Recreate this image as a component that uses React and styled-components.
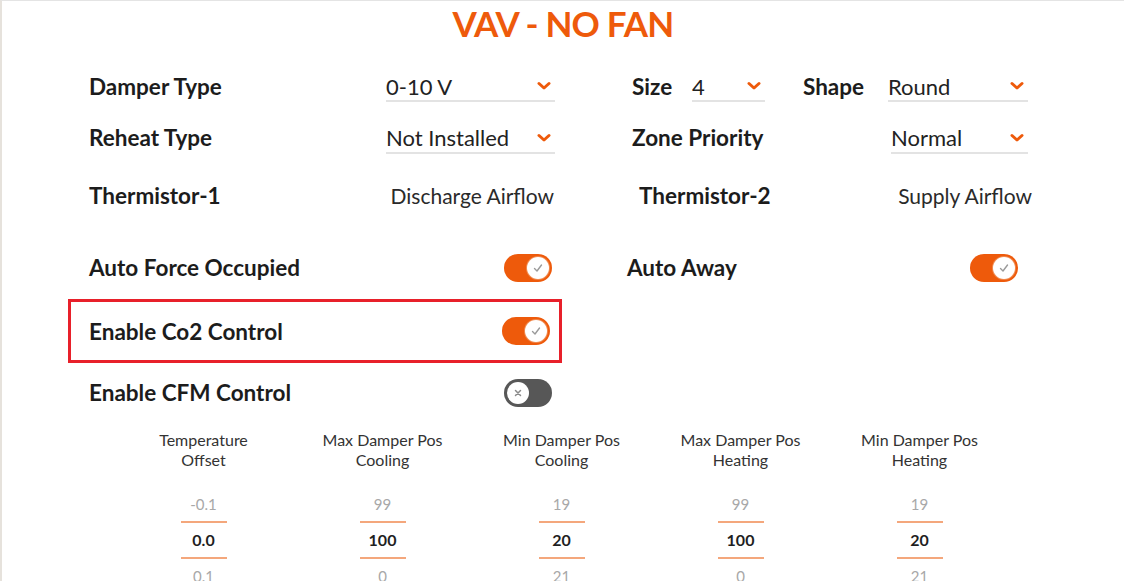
import React from "react";
import styled, { createGlobalStyle } from "styled-components";

const GlobalStyle = createGlobalStyle`
  html, body {
    margin: 0;
    padding: 0;
    background: #fff;
  }
  body {
    font-family: Lato, "Open Sans", sans-serif;
    color: #1c1c1c;
  }
`;

const ORANGE = "#ee5a0b";

const Frame = styled.div`
  width: 1124px;
  height: 581px;
  box-sizing: border-box;
  border-top: 1px solid #e4e4e4;
  border-left: 2px solid #e6e2dc;
  overflow: hidden;
`;

const Title = styled.h1`
  margin: 0;
  height: 44px;
  line-height: 44px;
  text-align: center;
  font-size: 35px;
  font-weight: 700;
  letter-spacing: -0.8px;
  color: ${ORANGE};
`;

const Form = styled.div`
  padding: 15px 0 0 87px;
`;

const SelectRow = styled.div`
  display: grid;
  grid-template-columns: 297px 169px 477px;
  align-items: center;
  height: ${(p) => p.$h}px;
`;

const Half = styled.div`
  display: flex;
  align-items: center;
  padding-left: ${(p) => 77 + (p.$indent || 0)}px;
`;

const Label = styled.div`
  font-size: 22.5px;
  font-weight: 700;
  color: #1c1c1c;
  white-space: nowrap;
  width: ${(p) => (p.$w ? `${p.$w}px` : "auto")};
  margin-left: ${(p) => p.$ml || 0}px;
  flex-shrink: 0;
`;

const SelectBox = styled.div`
  display: flex;
  align-items: center;
  justify-content: space-between;
  box-sizing: border-box;
  height: 32px;
  padding: 2px 4px 0 0;
  border-bottom: 2px solid #e3e3e3;
  width: ${(p) => p.$w}px;
  margin-left: ${(p) => (p.$auto ? "auto" : "0")};
  margin-right: ${(p) => p.$mr || 0}px;
  font-size: 22px;
  color: #222;
  white-space: nowrap;
`;

const Value = styled.div`
  font-size: 21px;
  color: #2a2a2a;
  text-align: right;
  white-space: nowrap;
  margin-left: ${(p) => (p.$auto ? "auto" : "0")};
  margin-right: ${(p) => p.$mr || 0}px;
`;

const ToggleRow = styled.div`
  display: flex;
  align-items: center;
  height: ${(p) => p.$h || 62}px;
`;

const ToggleCell = styled.div`
  display: flex;
  align-items: center;
  justify-content: space-between;
  width: ${(p) => p.$w}px;
  margin-left: ${(p) => p.$ml || 0}px;
`;

const Highlight = styled.div`
  display: flex;
  align-items: center;
  box-sizing: border-box;
  width: 494px;
  height: 64px;
  margin-left: -21px;
  padding: 0 9px 0 18px;
  border: 3px solid #e8202a;
`;

const Track = styled.div`
  position: relative;
  width: 48px;
  height: 28px;
  border-radius: 14px;
  background: ${(p) => (p.$on ? ORANGE : "#575757")};
  flex-shrink: 0;
`;

const Knob = styled.div`
  position: absolute;
  top: 3px;
  left: ${(p) => (p.$on ? "23px" : "3px")};
  width: 22px;
  height: 22px;
  border-radius: 50%;
  background: #fff;
  box-shadow: ${(p) => (p.$on ? "0 0 0 1px #f08a4f" : "none")};
  display: flex;
  align-items: center;
  justify-content: center;
`;

const Pickers = styled.div`
  display: grid;
  grid-template-columns: repeat(5, 179px);
  margin-left: 25px;
  padding-top: 8px;
`;

const Picker = styled.div`
  display: flex;
  flex-direction: column;
  align-items: center;
`;

const PickerLabel = styled.div`
  font-size: 16px;
  line-height: 20px;
  color: #333;
  text-align: center;
  height: 40px;
  margin-bottom: 17px;
  white-space: nowrap;
`;

const Wheel = styled.div`
  display: flex;
  flex-direction: column;
  align-items: center;
`;

const WheelItem = styled.div`
  height: 34px;
  line-height: 34px;
  font-size: ${(p) => (p.$active ? "16px" : "15px")};
  font-weight: ${(p) => (p.$active ? 700 : 400)};
  color: ${(p) => (p.$active ? "#1f1f1f" : "#a8a8a8")};
`;

const WheelLine = styled.div`
  width: 46px;
  height: 2px;
  background: #f4a77c;
`;

const Chevron = () => (
  <svg width="14" height="10" viewBox="0 0 14 10">
    <polyline
      points="2,2.5 7,7 12,2.5"
      fill="none"
      stroke={ORANGE}
      strokeWidth="3"
      strokeLinecap="round"
      strokeLinejoin="round"
    />
  </svg>
);

const Select = ({ value, w, auto, mr }) => (
  <SelectBox $w={w} $auto={auto} $mr={mr}>
    <span>{value}</span>
    <Chevron />
  </SelectBox>
);

const Toggle = ({ on }) => (
  <Track $on={on}>
    <Knob $on={on}>
      {on ? (
        <svg width="10" height="10" viewBox="0 0 10 10">
          <polyline
            points="1.5,5.5 4,8 8.5,2"
            fill="none"
            stroke="#9a9a9a"
            strokeWidth="1.4"
            strokeLinecap="round"
            strokeLinejoin="round"
          />
        </svg>
      ) : (
        <svg width="10" height="10" viewBox="0 0 10 10">
          <path
            d="M2.5 2.5 L7.5 7.5 M7.5 2.5 L2.5 7.5"
            stroke="#8a8a8a"
            strokeWidth="1.5"
            strokeLinecap="round"
          />
        </svg>
      )}
    </Knob>
  </Track>
);

const pickers = [
  { label: ["Temperature", "Offset"], values: ["-0.1", "0.0", "0.1"] },
  { label: ["Max Damper Pos", "Cooling"], values: ["99", "100", "0"] },
  { label: ["Min Damper Pos", "Cooling"], values: ["19", "20", "21"] },
  { label: ["Max Damper Pos", "Heating"], values: ["99", "100", "0"] },
  { label: ["Min Damper Pos", "Heating"], values: ["19", "20", "21"] },
];

export default function App() {
  return (
    <>
      <GlobalStyle />
      <Frame>
        <Title>VAV - NO FAN</Title>
        <Form>
          <SelectRow $h={52}>
            <Label>Damper Type</Label>
            <Select value="0-10 V" w={169} />
            <Half>
              <Label $w={60}>Size</Label>
              <Select value="4" w={73} />
              <Label $w={85} $ml={38}>Shape</Label>
              <Select value="Round" w={140} />
            </Half>
          </SelectRow>
          <SelectRow $h={51}>
            <Label>Reheat Type</Label>
            <Select value="Not Installed" w={169} />
            <Half>
              <Label>Zone Priority</Label>
              <Select value="Normal" w={137} auto mr={4} />
            </Half>
          </SelectRow>
          <SelectRow $h={64}>
            <Label>Thermistor-1</Label>
            <Value $mr={1}>Discharge Airflow</Value>
            <Half $indent={7}>
              <Label>Thermistor-2</Label>
              <Value $auto>Supply Airflow</Value>
            </Half>
          </SelectRow>
          <div style={{ height: 9 }} />
          <ToggleRow $h={63}>
            <ToggleCell $w={463}>
              <Label>Auto Force Occupied</Label>
              <Toggle on />
            </ToggleCell>
            <ToggleCell $w={391} $ml={75}>
              <Label>Auto Away</Label>
              <Toggle on />
            </ToggleCell>
          </ToggleRow>
          <Highlight>
            <ToggleCell $w={461}>
              <Label>Enable Co2 Control</Label>
              <Toggle on />
            </ToggleCell>
          </Highlight>
          <ToggleRow $h={59}>
            <ToggleCell $w={463}>
              <Label>Enable CFM Control</Label>
              <Toggle />
            </ToggleCell>
          </ToggleRow>
          <Pickers>
            {pickers.map((p, i) => (
              <Picker key={i}>
                <PickerLabel>
                  {p.label[0]}
                  <br />
                  {p.label[1]}
                </PickerLabel>
                <Wheel>
                  <WheelItem>{p.values[0]}</WheelItem>
                  <WheelLine />
                  <WheelItem $active>{p.values[1]}</WheelItem>
                  <WheelLine />
                  <WheelItem>{p.values[2]}</WheelItem>
                </Wheel>
              </Picker>
            ))}
          </Pickers>
        </Form>
      </Frame>
    </>
  );
}
